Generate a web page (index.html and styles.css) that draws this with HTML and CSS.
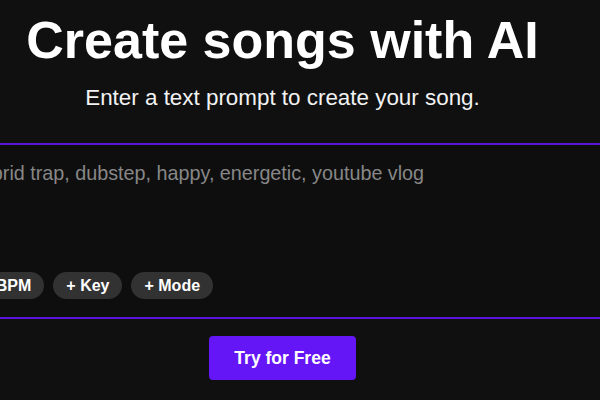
FILE: index.html
```html
<!DOCTYPE html>
<html lang="en">
<head>
<meta charset="utf-8">
<title>Create songs with AI</title>
<link rel="stylesheet" href="styles.css">
</head>
<body>
<main class="page">
  <h1 class="title">Create songs with AI</h1>
  <p class="subtitle">Enter a text prompt to create your song.</p>
  <section class="prompt-box">
    <div class="placeholder">hybrid trap, dubstep, happy, energetic, youtube vlog</div>
    <div class="chips">
      <span class="chip">+ BPM</span>
      <span class="chip">+ Key</span>
      <span class="chip">+ Mode</span>
    </div>
  </section>
  <button class="cta">Try for Free</button>
</main>
</body>
</html>
```

FILE: styles.css
```css
html, body {
  margin: 0;
  padding: 0;
  background: #101010;
  overflow: hidden;
  width: 600px;
  height: 400px;
}

.page {
  width: 565px;
  display: flex;
  flex-direction: column;
  align-items: center;
  font-family: "Liberation Sans", Arial, sans-serif;
  color: #ffffff;
}

.title {
  margin: 10px 0 0;
  font-size: 52px;
  font-weight: 700;
  line-height: 60px;
  white-space: nowrap;
}

.subtitle {
  margin: 15px 0 0;
  font-size: 22.4px;
  line-height: 25px;
  color: #f2f2f2;
  white-space: nowrap;
}

.prompt-box {
  align-self: stretch;
  margin: 33px -80px 0;
  border-top: 2px solid #5a14dc;
  border-bottom: 2px solid #5a14dc;
  background: #0e0e0e;
  padding: 18px 0 18px 51px;
  display: flex;
  flex-direction: column;
  box-sizing: border-box;
  height: 176px;
}

.placeholder {
  flex: 1;
  font-size: 19.75px;
  line-height: 21px;
  color: #878787;
  white-space: nowrap;
}

.chips {
  display: flex;
  gap: 9px;
  margin-left: -2px;
}

.chip {
  background: #323232;
  border-radius: 14px;
  padding: 0 13px;
  height: 27px;
  line-height: 27px;
  font-size: 16px;
  font-weight: 700;
  color: #ffffff;
  white-space: nowrap;
}

.cta {
  margin-top: 17px;
  height: 44px;
  padding: 0 25px;
  border: none;
  border-radius: 4px;
  background: #6516f6;
  color: #ffffff;
  font-family: "Liberation Sans", Arial, sans-serif;
  font-size: 17.5px;
  font-weight: 700;
}
```
